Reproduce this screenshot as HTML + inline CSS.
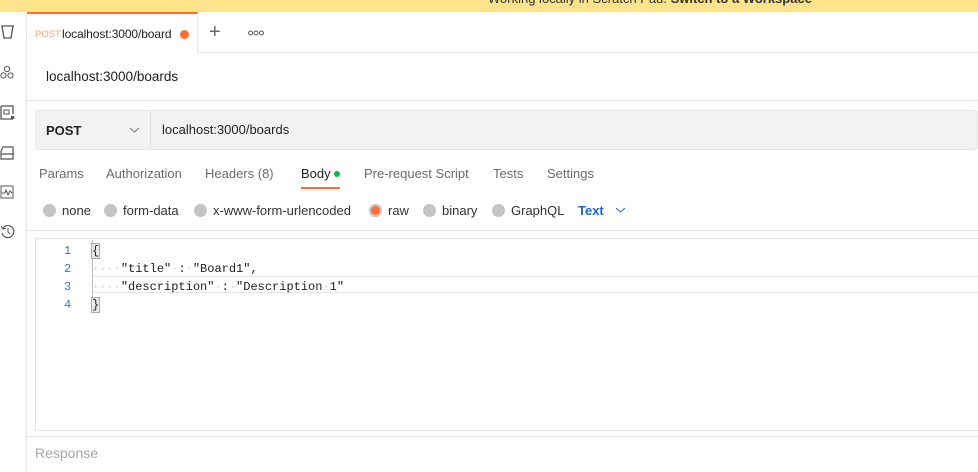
<!DOCTYPE html>
<html><head><style>
*{margin:0;padding:0;box-sizing:border-box}
body{width:978px;height:472px;overflow:hidden;background:#fff;font-family:"Liberation Sans",Arial,sans-serif;font-size:13px;color:#212121;position:relative}
.a{position:absolute}
.banner{left:0;top:0;width:978px;height:12px;background:#fde38a;overflow:hidden}
.side{left:0;top:12px;width:27px;height:460px;border-right:1px solid #e6e6e6}
.gray{color:#6b6b6b}
.rd{display:inline-block;width:13px;height:13px;border-radius:50%;background:#c4c4c4;vertical-align:-2px;margin-right:6px}
.mono{font-family:"Liberation Mono",monospace;font-size:12px}
.dot{color:#ccc}
</style></head><body>
<div class="a banner"><div class="a" style="left:488px;top:-9px;font-size:13px;color:#333">Working locally in Scratch Pad. <b>Switch to a Workspace</b></div></div>
<div class="a side">
<svg class="a" style="left:0;top:12px" width="16" height="16"><path d="M1 2H14M2 2L4 14H11L13 2" stroke="#555" fill="none" stroke-width="1.3"/></svg>
<svg class="a" style="left:0;top:53px" width="16" height="16"><circle cx="7" cy="4" r="2.6" stroke="#555" fill="none"/><circle cx="3.5" cy="10.5" r="2.6" stroke="#555" fill="none"/><circle cx="10.5" cy="10.5" r="2.6" stroke="#555" fill="none"/></svg>
<svg class="a" style="left:0;top:93px" width="16" height="16"><path d="M1 1H13V9M13 14H1V1" stroke="#555" fill="none" stroke-width="1.3"/><rect x="4" y="5" width="5" height="4" stroke="#555" fill="none"/><rect x="11" y="11" width="3" height="3" fill="#555"/></svg>
<svg class="a" style="left:0;top:133px" width="16" height="16"><path d="M1 6L3 2H13V14H1Z M1 9H14" stroke="#555" fill="none" stroke-width="1.2"/></svg>
<svg class="a" style="left:0;top:173px" width="16" height="16"><rect x="1" y="1" width="12" height="12" stroke="#555" fill="none"/><path d="M2 8L5 8L6 5L8 10L10 6L12 8" stroke="#555" fill="none"/></svg>
<svg class="a" style="left:0;top:212px" width="16" height="16"><path d="M3 4A6 6 0 1 1 2 9" stroke="#555" fill="none" stroke-width="1.2"/><path d="M1 2L3 5L6 4M8 4V8L10 10" stroke="#555" fill="none"/></svg>
</div>
<div class="a" style="left:27px;top:12px;width:171px;height:41px;border-top:2px solid #ff6c37;border-right:1px solid #e6e6e6"></div>
<div class="a" style="left:198px;top:52px;width:780px;border-top:1px solid #e6e6e6"></div>
<div class="a" style="left:35px;top:29px;font-size:9.5px;color:#f3a67a">POST</div>
<div class="a" style="left:62px;top:27px;font-size:12px;letter-spacing:-0.1px">localhost:3000/board</div>
<div class="a" style="left:180px;top:30px;width:9px;height:9px;border-radius:50%;background:#ff6c37"></div>
<div class="a" style="left:209px;top:21px;font-size:20px;color:#666;font-weight:300">+</div>
<svg class="a" style="left:248px;top:30px" width="16" height="6"><circle cx="2.5" cy="3" r="2" stroke="#555" fill="none"/><circle cx="8" cy="3" r="2" stroke="#555" fill="none"/><circle cx="13.5" cy="3" r="2" stroke="#555" fill="none"/></svg>
<div class="a" style="left:46px;top:69px;font-size:13.5px">localhost:3000/boards</div>
<div class="a" style="left:27px;top:100px;width:951px;border-top:1px solid #e6e6e6"></div>
<div class="a" style="left:35px;top:110px;width:943px;height:40px;background:#f2f2f2;border:1px solid #e6e6e6;border-radius:3px"></div>
<div class="a" style="left:150px;top:111px;height:38px;border-left:1px solid #e0e0e0"></div>
<div class="a" style="left:46px;top:123px;font-weight:bold">POST</div>
<svg class="a" style="left:129px;top:126px" width="11" height="8"><path d="M1 2L5.5 6L10 2" stroke="#777" fill="none"/></svg>
<div class="a" style="left:162px;top:122px">localhost:3000/boards</div>
<div class="a gray" style="left:39px;top:166px">Params</div>
<div class="a gray" style="left:106px;top:166px">Authorization</div>
<div class="a gray" style="left:205px;top:166px">Headers <span style="color:#6b6b6b">(8)</span></div>
<div class="a" style="left:301px;top:166px">Body</div>
<div class="a" style="left:334px;top:171px;width:6px;height:6px;border-radius:50%;background:#0cbb52"></div>
<div class="a" style="left:301px;top:187px;width:39px;height:2px;background:#ff6c37"></div>
<div class="a gray" style="left:364px;top:166px">Pre-request Script</div>
<div class="a gray" style="left:493px;top:166px">Tests</div>
<div class="a gray" style="left:547px;top:166px">Settings</div>
<div class="a" style="left:43px;top:203px;color:#333"><span class="rd"></span>none</div>
<div class="a" style="left:104px;top:203px;color:#333"><span class="rd"></span>form-data</div>
<div class="a" style="left:194px;top:203px;color:#333"><span class="rd"></span>x-www-form-urlencoded</div>
<div class="a" style="left:369px;top:203px;color:#333"><span class="rd" style="background:#ff6c37;box-shadow:0 0 0 2px #c8c8c8 inset"></span>raw</div>
<div class="a" style="left:423px;top:203px;color:#333"><span class="rd"></span>binary</div>
<div class="a" style="left:492px;top:203px;color:#333"><span class="rd"></span>GraphQL</div>
<div class="a" style="left:578px;top:203px;color:#1c64d6;font-weight:bold">Text</div>
<svg class="a" style="left:615px;top:206px" width="11" height="8"><path d="M1 2L5.5 6L10 2" stroke="#1c64d6" fill="none"/></svg>
<div class="a" style="left:27px;top:230px;width:951px;border-top:1px solid #e6e6e6"></div>
<div class="a" style="left:35px;top:238px;width:950px;height:193px;border:1px solid #e6e6e6"></div>
<div class="a" style="left:92px;top:276px;width:890px;height:17px;border-top:1px solid #e6e6e6;border-bottom:1px solid #e6e6e6"></div>
<div class="a" style="left:92px;top:240px;height:70px;border-left:1px solid #bbb"></div>
<div class="a mono" style="left:64px;top:242px;color:#2f7fb0;line-height:18px">1<br>2<br>3<br>4</div>
<div class="a mono" style="left:92px;top:242px;line-height:18px;white-space:pre;letter-spacing:0px"><span style="background:#e8e8e8;outline:1px solid #aaa">{</span>
<span class="dot">····</span>"title"<span class="dot">·</span>:<span class="dot">·</span>"Board1",
<span class="dot">····</span>"description"<span class="dot">·</span>:<span class="dot">·</span>"Description<span class="dot">·</span>1"
<span style="background:#e8e8e8;outline:1px solid #aaa">}</span></div>
<div class="a" style="left:27px;top:436px;width:951px;border-top:1px solid #e6e6e6"></div>
<div class="a" style="left:35px;top:445px;font-size:14px;color:#a6a6a6">Response</div>
</body></html>
